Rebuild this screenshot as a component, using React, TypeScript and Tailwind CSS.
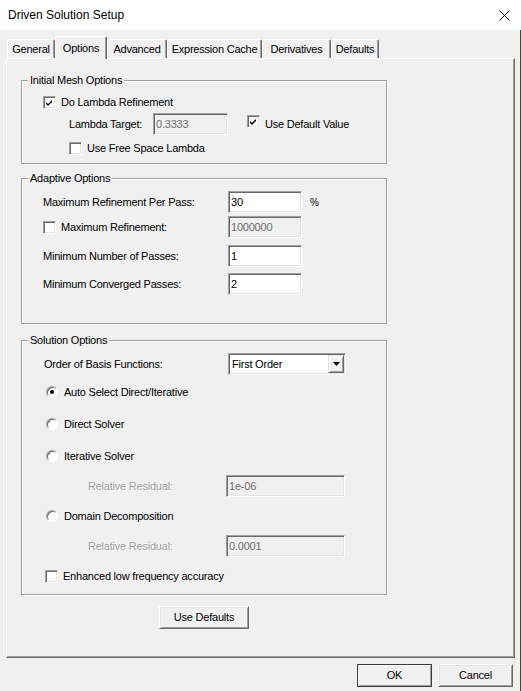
import React from 'react';

// classic Win32 dialog bits
const sunken =
  'border border-t-[#a0a0a0] border-l-[#a0a0a0] border-b-white border-r-white shadow-[inset_1px_1px_0_#696969,inset_-1px_-1px_0_#e3e3e3]';

const Check = ({ checked }: { checked?: boolean }) => (
  <span className={`relative inline-flex w-[13px] h-[13px] shrink-0 bg-white ${sunken}`}>
    {checked && (
      <svg className="absolute left-[1px] top-[1px]" width="9" height="9" viewBox="0 0 9 9">
        <path d="M1 4 L3 6 L7 2 L7 4 L3 8 L1 6 Z" fill="#000" />
      </svg>
    )}
  </span>
);

const Radio = ({ on }: { on?: boolean }) => (
  <span className="inline-flex items-center justify-center w-[12px] h-[12px] shrink-0 rounded-full bg-white border border-t-[#a0a0a0] border-l-[#a0a0a0] border-b-white border-r-white shadow-[inset_1px_1px_0_#696969]">
    {on && <span className="w-[4px] h-[4px] rounded-full bg-black" />}
  </span>
);

const Field = ({ value, w, disabled }: { value: string; w: string; disabled?: boolean }) => (
  <div
    className={`${w} h-[22px] flex items-center pl-[2px] ${sunken} ${
      disabled ? 'bg-[#f0f0f0] text-[#6d6d6d]' : 'bg-white text-black'
    }`}
  >
    {value}
  </div>
);

const Button = ({ label, w, def }: { label: string; w: string; def?: boolean }) => (
  <div
    className={`${w} h-[23px] flex items-center justify-center bg-[#f0f0f0] border ${
      def
        ? 'border-[#3c3c3c] shadow-[inset_1px_1px_0_#fff,inset_-1px_-1px_0_#a0a0a0]'
        : 'border-t-white border-l-white border-b-[#696969] border-r-[#696969] shadow-[inset_1px_1px_0_#e3e3e3,inset_-1px_-1px_0_#a0a0a0]'
    }`}
  >
    {label}
  </div>
);

const Group = ({ title, h, children }: { title: string; h: string; children: React.ReactNode }) => (
  <div className={`relative w-[366px] ${h} border border-[#a0a0a0] shadow-[inset_1px_1px_0_#fff,1px_1px_0_#fff] flex flex-col`}>
    <span className="absolute -top-[8px] left-[6px] bg-[#f0f0f0] px-[2px] leading-[14px]">{title}</span>
    {children}
  </div>
);

const tabs = [
  { label: 'General', w: 'w-[48px]' },
  { label: 'Options', w: 'w-[52px]', active: true },
  { label: 'Advanced', w: 'w-[60px]' },
  { label: 'Expression Cache', w: 'w-[95px]' },
  { label: 'Derivatives', w: 'w-[69px]' },
  { label: 'Defaults', w: 'w-[48px]' },
];

const Disabled = ({ children }: { children: React.ReactNode }) => (
  <span className="text-[#a0a0a0] [text-shadow:1px_1px_0_#fff]">{children}</span>
);

export default function App() {
  return (
    <div className="w-[521px] h-[691px] overflow-hidden bg-[#f0f0f0] flex flex-col font-['Liberation_Sans',Arial,sans-serif] text-[11px] tracking-[-0.22px] text-black">
      {/* title bar */}
      <div className="h-[30px] bg-white flex items-center justify-between pl-[8px] pr-[11px] shrink-0">
        <span className="text-[12px] tracking-normal">Driven Solution Setup</span>
        <svg width="11" height="11" viewBox="0 0 11 11">
          <path d="M0.5 0.5 L10.5 10.5 M10.5 0.5 L0.5 10.5" stroke="#000" strokeWidth="1" />
        </svg>
      </div>

      <div className="flex-1 flex flex-col px-[6px] border-r border-[#3a4a3a]">
        {/* tabs */}
        <div className="mt-[6px] h-[22px] flex items-end pl-[1px]">
          {tabs.map((t) =>
            t.active ? (
              <div
                key={t.label}
                className={`${t.w} h-[23px] -mb-[1px] relative z-10 bg-[#f0f0f0] flex items-start justify-center pt-[3px] rounded-t-[2px] border-l border-t border-r border-l-white border-t-white border-r-[#696969] shadow-[inset_-1px_0_0_#a0a0a0]`}
              >
                {t.label}
              </div>
            ) : (
              <div
                key={t.label}
                className={`${t.w} h-[19px] flex items-center justify-center rounded-t-[2px] border-l border-t border-r border-l-white border-t-white border-r-[#696969] shadow-[inset_-1px_0_0_#a0a0a0]`}
              >
                {t.label}
              </div>
            )
          )}
        </div>

        {/* panel */}
        <div className="w-[509px] h-[600px] flex flex-col pt-[21px] pl-[14px] border border-l-white border-t-white border-r-[#696969] border-b-[#696969] shadow-[inset_-1px_-1px_0_#a0a0a0]">
          <Group title="Initial Mesh Options" h="h-[84px]">
            <div className="mt-[10px] h-[22px] flex items-center pl-[21px] gap-[5px]">
              <Check checked />
              <span>Do Lambda Refinement</span>
            </div>
            <div className="h-[22px] flex items-center pl-[47px]">
              <span className="w-[84px]">Lambda Target:</span>
              <Field value="0.3333" w="w-[75px]" disabled />
              <span className="ml-[19px]">
                <Check checked />
              </span>
              <span className="ml-[5px]">Use Default Value</span>
            </div>
            <div className="mt-[2px] h-[22px] flex items-center pl-[47px] gap-[5px]">
              <Check />
              <span>Use Free Space Lambda</span>
            </div>
          </Group>

          <div className="mt-[14px]">
            <Group title="Adaptive Options" h="h-[146px]">
              <div className="mt-[12px] h-[22px] flex items-center pl-[21px]">
                <span className="w-[185px]">Maximum Refinement Per Pass:</span>
                <Field value="30" w="w-[74px]" />
                <span className="ml-[8px] text-[10px]">%</span>
              </div>
              <div className="mt-[3px] h-[22px] flex items-center pl-[21px]">
                <span className="w-[185px] flex items-center gap-[5px]">
                  <Check />
                  <span>Maximum Refinement:</span>
                </span>
                <Field value="1000000" w="w-[74px]" disabled />
              </div>
              <div className="mt-[7px] h-[22px] flex items-center pl-[21px]">
                <span className="w-[185px]">Minimum Number of Passes:</span>
                <Field value="1" w="w-[74px]" />
              </div>
              <div className="mt-[6px] h-[22px] flex items-center pl-[21px]">
                <span className="w-[185px]">Minimum Converged Passes:</span>
                <Field value="2" w="w-[74px]" />
              </div>
            </Group>
          </div>

          <div className="mt-[16px]">
            <Group title="Solution Options" h="h-[255px]">
              <div className="mt-[12px] h-[22px] flex items-center pl-[22px]">
                <span className="w-[184px]">Order of Basis Functions:</span>
                <div className={`w-[118px] h-[22px] flex items-center justify-between pl-[3px] pr-[1px] bg-white ${sunken}`}>
                  <span>First Order</span>
                  <span className="w-[16px] h-[18px] flex items-center justify-center bg-[#f0f0f0] border border-t-[#e3e3e3] border-l-[#e3e3e3] border-b-[#696969] border-r-[#696969] shadow-[inset_1px_1px_0_#fff,inset_-1px_-1px_0_#a0a0a0]">
                    <svg width="7" height="4" viewBox="0 0 7 4">
                      <path d="M0 0 H7 L3.5 4 Z" fill="#000" />
                    </svg>
                  </span>
                </div>
              </div>
              <div className="mt-[6px] h-[22px] flex items-center pl-[24px] gap-[6px]">
                <Radio on />
                <span>Auto Select Direct/Iterative</span>
              </div>
              <div className="mt-[10px] h-[22px] flex items-center pl-[24px] gap-[6px]">
                <Radio />
                <span>Direct Solver</span>
              </div>
              <div className="mt-[10px] h-[22px] flex items-center pl-[24px] gap-[6px]">
                <Radio />
                <span>Iterative Solver</span>
              </div>
              <div className="mt-[8px] h-[22px] flex items-center pl-[66px]">
                <span className="w-[138px]">
                  <Disabled>Relative Residual:</Disabled>
                </span>
                <Field value="1e-06" w="w-[119px]" disabled />
              </div>
              <div className="mt-[8px] h-[22px] flex items-center pl-[24px] gap-[6px]">
                <Radio />
                <span>Domain Decomposition</span>
              </div>
              <div className="mt-[8px] h-[22px] flex items-center pl-[66px]">
                <span className="w-[138px]">
                  <Disabled>Relative Residual:</Disabled>
                </span>
                <Field value="0.0001" w="w-[119px]" disabled />
              </div>
              <div className="mt-[8px] h-[22px] flex items-center pl-[23px] gap-[5px]">
                <Check />
                <span>Enhanced low frequency accuracy</span>
              </div>
            </Group>
          </div>

          <div className="mt-[11px] ml-[138px]">
            <Button label="Use Defaults" w="w-[90px]" />
          </div>
        </div>

        {/* dialog buttons */}
        <div className="mt-[6px] flex justify-end gap-[6px] pr-[1px]">
          <Button label="OK" w="w-[75px]" def />
          <Button label="Cancel" w="w-[75px]" />
        </div>
      </div>
    </div>
  );
}
